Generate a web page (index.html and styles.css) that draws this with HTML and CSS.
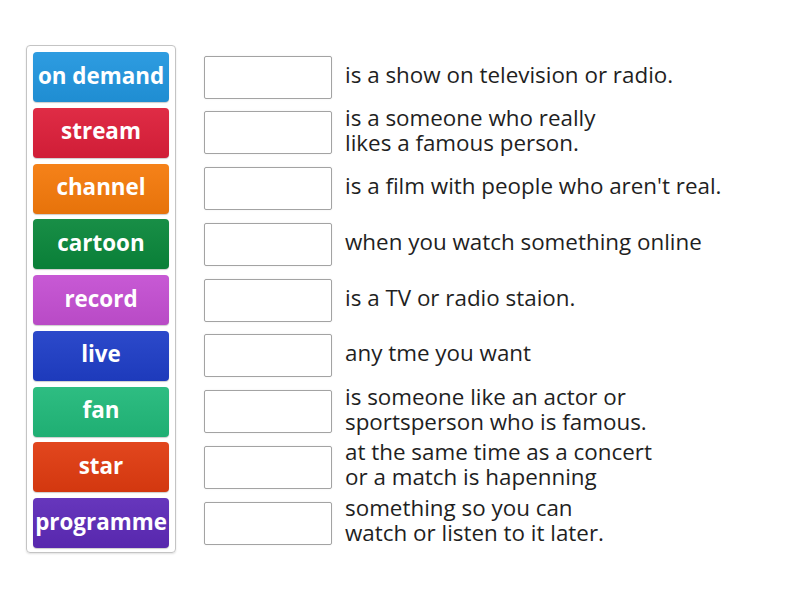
FILE: index.html
```html
<!DOCTYPE html>
<html>
<head>
<meta charset="utf-8">
<link rel="stylesheet" href="styles.css">
</head>
<body>
<div class="page">
  <div class="panel">
    <div class="tile c1">on demand</div>
    <div class="tile c2">stream</div>
    <div class="tile c3">channel</div>
    <div class="tile c4">cartoon</div>
    <div class="tile c5">record</div>
    <div class="tile c6">live</div>
    <div class="tile c7">fan</div>
    <div class="tile c8">star</div>
    <div class="tile c9">programme</div>
  </div>
  <div class="answers">
    <div class="row"><div class="box"></div><div class="def">is a show on television or radio.</div></div>
    <div class="row"><div class="box"></div><div class="def">is a someone who really<br>likes a famous person.</div></div>
    <div class="row"><div class="box"></div><div class="def">is a film with people who aren't real.</div></div>
    <div class="row"><div class="box"></div><div class="def">when you watch something online</div></div>
    <div class="row"><div class="box"></div><div class="def">is a TV or radio staion.</div></div>
    <div class="row"><div class="box"></div><div class="def">any tme you want</div></div>
    <div class="row"><div class="box"></div><div class="def">is someone like an actor or<br>sportsperson who is famous.</div></div>
    <div class="row"><div class="box"></div><div class="def">at the same time as a concert<br>or a match is hapenning</div></div>
    <div class="row"><div class="box"></div><div class="def">something so you can<br>watch or listen to it later.</div></div>
  </div>
</div>
</body>
</html>
```
FILE: styles.css
```css
html, body {
  margin: 0;
  padding: 0;
  background: #ffffff;
}
body {
  width: 800px;
  height: 600px;
  overflow: hidden;
  font-family: "Open Sans", "Noto Sans", sans-serif;
}
.page {
  display: flex;
  align-items: flex-start;
  padding: 45px 0 0 26px;
}
.panel {
  border: 1px solid #c4c4c4;
  border-radius: 4px;
  padding: 6px 6px 4px 6px;
  display: flex;
  flex-direction: column;
  gap: 5.75px;
  width: 136px;
  box-shadow: 0 1px 2px rgba(0,0,0,0.12);
}
.tile {
  height: 50px;
  box-sizing: border-box;
  padding-bottom: 4px;
  border-radius: 4px;
  display: flex;
  align-items: center;
  justify-content: center;
  color: #ffffff;
  font-weight: 700;
  font-size: 22.4px;
  letter-spacing: 0;
  white-space: nowrap;
  box-shadow: 0 1px 1px rgba(0,0,0,0.2);
  background-image: linear-gradient(to bottom, rgba(255,255,255,0.06), rgba(0,0,0,0.06));
}
.c1 { background-color: #2196df; }
.c2 { background-color: #dd1f3a; }
.c3 { background-color: #f57a0b; }
.c4 { background-color: #0a873b; }
.c5 { background-color: #c44fd2; }
.c6 { background-color: #1f3ec7; }
.c7 { background-color: #21b97a; }
.c8 { background-color: #e03b10; }
.c9 { background-color: #5d2ab8; }
.answers {
  display: flex;
  flex-direction: column;
  gap: 5.75px;
  padding-top: 7px;
  margin-left: 28px;
}
.row {
  height: 50px;
  display: flex;
  align-items: center;
}
.box {
  width: 126px;
  height: 41px;
  border: 1px solid #a3a3a3;
  border-radius: 2px;
  background: #ffffff;
  box-shadow: 0 0 2px rgba(0,0,0,0.08);
  flex: none;
}
.def {
  margin-left: 13px;
  padding-bottom: 6px;
  font-size: 22.4px;
  line-height: 25px;
  color: #1f1f1f;
  white-space: nowrap;
}
```
